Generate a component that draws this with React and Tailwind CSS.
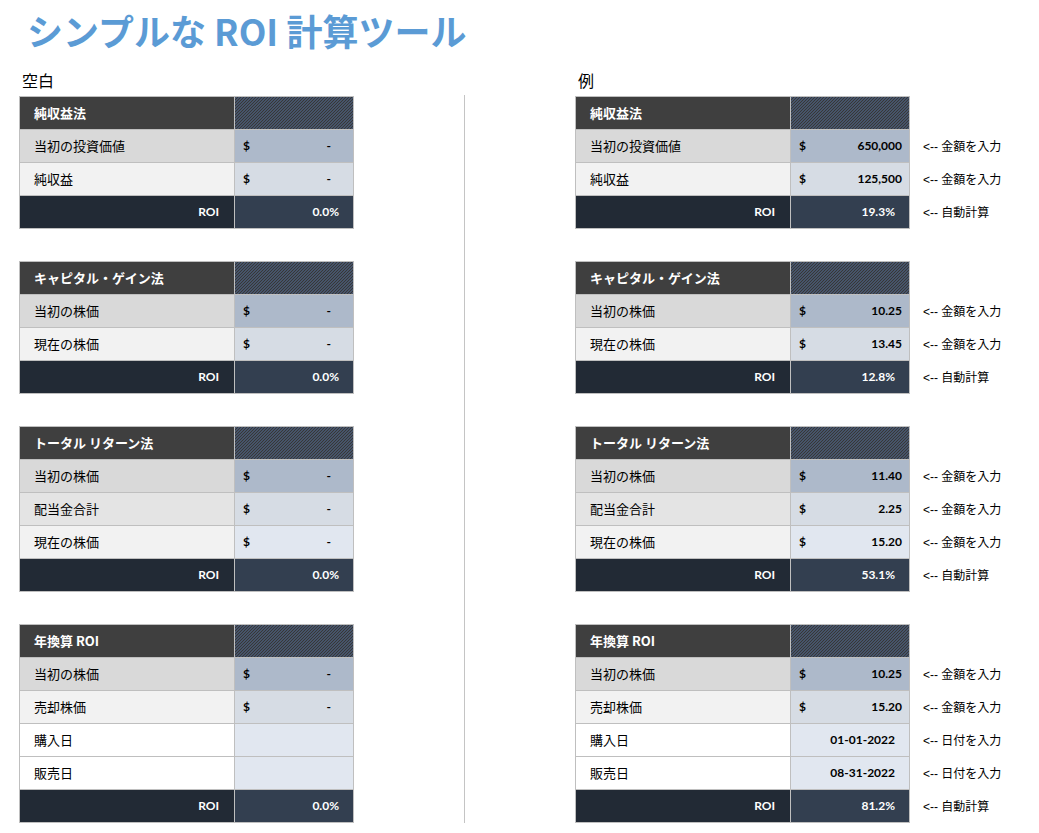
import React from 'react';

const jp = "font-['Noto_Sans_CJK_JP',sans-serif]";
const num = "font-['Lato','Noto_Sans_CJK_JP',sans-serif] font-bold text-[12px]";

const tones = {
  a: { label: 'bg-[#d9d9d9]', value: 'bg-[#adb9ca]' },
  b: { label: 'bg-[#f2f2f2]', value: 'bg-[#d6dce4]' },
  m: { label: 'bg-[#e4e4e4]', value: 'bg-[#d6dce4]' },
  c: { label: 'bg-[#f2f2f2]', value: 'bg-[#e1e7f0]' },
  d: { label: 'bg-white', value: 'bg-[#e1e7f0]' },
};

const blank = [
  {
    title: '純収益法',
    rows: [
      { label: '当初の投資価値', tone: 'a', dollar: true, value: '-' },
      { label: '純収益', tone: 'b', dollar: true, value: '-' },
    ],
    roi: '0.0%',
  },
  {
    title: 'キャピタル・ゲイン法',
    rows: [
      { label: '当初の株価', tone: 'a', dollar: true, value: '-' },
      { label: '現在の株価', tone: 'b', dollar: true, value: '-' },
    ],
    roi: '0.0%',
  },
  {
    title: 'トータル リターン法',
    rows: [
      { label: '当初の株価', tone: 'a', dollar: true, value: '-' },
      { label: '配当金合計', tone: 'm', dollar: true, value: '-' },
      { label: '現在の株価', tone: 'c', dollar: true, value: '-' },
    ],
    roi: '0.0%',
  },
  {
    title: '年換算 ROI',
    rows: [
      { label: '当初の株価', tone: 'a', dollar: true, value: '-' },
      { label: '売却株価', tone: 'b', dollar: true, value: '-' },
      { label: '購入日', tone: 'd', value: '' },
      { label: '販売日', tone: 'd', value: '' },
    ],
    roi: '0.0%',
  },
];

const example = [
  {
    title: '純収益法',
    rows: [
      { label: '当初の投資価値', tone: 'a', dollar: true, value: '650,000', note: '<-- 金額を入力' },
      { label: '純収益', tone: 'b', dollar: true, value: '125,500', note: '<-- 金額を入力' },
    ],
    roi: '19.3%',
  },
  {
    title: 'キャピタル・ゲイン法',
    rows: [
      { label: '当初の株価', tone: 'a', dollar: true, value: '10.25', note: '<-- 金額を入力' },
      { label: '現在の株価', tone: 'b', dollar: true, value: '13.45', note: '<-- 金額を入力' },
    ],
    roi: '12.8%',
  },
  {
    title: 'トータル リターン法',
    rows: [
      { label: '当初の株価', tone: 'a', dollar: true, value: '11.40', note: '<-- 金額を入力' },
      { label: '配当金合計', tone: 'm', dollar: true, value: '2.25', note: '<-- 金額を入力' },
      { label: '現在の株価', tone: 'c', dollar: true, value: '15.20', note: '<-- 金額を入力' },
    ],
    roi: '53.1%',
  },
  {
    title: '年換算 ROI',
    rows: [
      { label: '当初の株価', tone: 'a', dollar: true, value: '10.25', note: '<-- 金額を入力' },
      { label: '売却株価', tone: 'b', dollar: true, value: '15.20', note: '<-- 金額を入力' },
      { label: '購入日', tone: 'd', value: '01-01-2022', note: '<-- 日付を入力' },
      { label: '販売日', tone: 'd', value: '08-31-2022', note: '<-- 日付を入力' },
    ],
    roi: '81.2%',
  },
];

const Table = ({ data }) => (
  <div className="w-[335px] border border-[#bfbfbf]">
    <div className="flex h-[32px]">
      <div className={`w-[214px] bg-[#3f3f3f] pl-[14px] flex items-center text-white font-bold text-[13px] ${jp}`}>
        {data.title}
      </div>
      <div className="w-[119px] border-l border-[#bfbfbf] bg-[repeating-linear-gradient(135deg,#373737_0px,#373737_0.707px,#46546b_0.707px,#46546b_2.121px)]" />
    </div>
    {data.rows.map((row, i) => {
      const t = tones[row.tone];
      const isDash = row.value === '-';
      const isDate = !row.dollar;
      return (
        <div key={i} className="flex h-[33px] border-t border-[#bfbfbf]">
          <div className={`w-[214px] ${t.label} pl-[14px] flex items-center text-[13px] text-black ${jp}`}>
            {row.label}
          </div>
          <div
            className={`w-[119px] border-l border-[#bfbfbf] ${t.value} flex items-center pl-[8px] ${
              isDash ? 'pr-[22px]' : isDate ? 'pr-[14px]' : 'pr-[7px]'
            } ${row.dollar ? 'justify-between' : 'justify-end'} ${num} text-black`}
          >
            {row.dollar && <span>$</span>}
            <span>{row.value}</span>
          </div>
        </div>
      );
    })}
    <div className="flex h-[33px] border-t border-[#bfbfbf]">
      <div className={`w-[214px] bg-[#222a35] pr-[15px] flex items-center justify-end text-white ${num}`}>ROI</div>
      <div className={`w-[119px] border-l border-[#bfbfbf] bg-[#333f50] pr-[14px] flex items-center justify-end text-white ${num}`}>
        {data.roi}
      </div>
    </div>
  </div>
);

const Notes = ({ data }) => (
  <div className={`ml-[13px] flex flex-col pt-[1px] text-[12px] text-black font-['Liberation_Sans','Noto_Sans_CJK_JP',sans-serif]`}>
    <div className="h-[33px]" />
    {data.rows.map((row, i) => (
      <div key={i} className="h-[33px] flex items-center whitespace-nowrap">{row.note}</div>
    ))}
    <div className="h-[33px] flex items-center whitespace-nowrap">{'<-- 自動計算'}</div>
  </div>
);

const App = () => {
  return (
    <div className={`w-[1039px] h-[833px] bg-white overflow-hidden ${jp}`}>
      <h1 className="mt-[12px] pl-[27px] h-[36px] leading-[36px] text-[36px] font-bold text-[#5b9bd5] whitespace-nowrap">
        シンプルな ROI 計算ツール
      </h1>
      <div className="flex">
        <section className="ml-[19px] w-[335px]">
          <div className="h-[48px] pt-[24px] pl-[3px] text-[16px] leading-[16px] text-black">空白</div>
          <div className="flex flex-col gap-[32px]">
            {blank.map((t, i) => (
              <Table key={i} data={t} />
            ))}
          </div>
        </section>
        <div className="ml-[110px] mt-[47px] w-px bg-[#c4c4c4]" />
        <section className="ml-[110px]">
          <div className="h-[48px] pt-[24px] pl-[3px] text-[16px] leading-[16px] text-black">例</div>
          <div className="flex flex-col gap-[32px]">
            {example.map((t, i) => (
              <div key={i} className="flex">
                <Table data={t} />
                <Notes data={t} />
              </div>
            ))}
          </div>
        </section>
      </div>
    </div>
  );
};

export default App;
